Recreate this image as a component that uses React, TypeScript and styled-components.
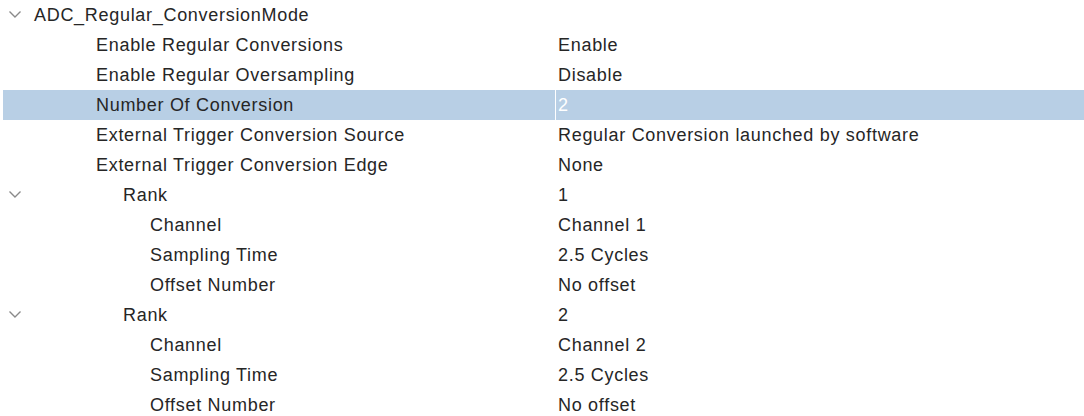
import React from "react";
import styled, { createGlobalStyle } from "styled-components";

const Global = createGlobalStyle`
  html, body { margin: 0; padding: 0; background: #ffffff; }
  body { font-family: "Liberation Sans", Arial, sans-serif; }
`;

const Tree = styled.div`
  width: 1084px;
  height: 416px;
  overflow: hidden;
  background: #ffffff;
  display: flex;
  flex-direction: column;
`;

const Row = styled.div<{ $selected?: boolean }>`
  display: grid;
  grid-template-columns: 552px 1px 1fr;
  flex: 0 0 30px;
  height: 30px;
  margin-left: 3px;
  background: ${(p) => (p.$selected ? "#b8cfe5" : "transparent")};
  color: #262626;
  font-size: 18px;
  letter-spacing: 0.7px;
`;

const NameCell = styled.div<{ $indent: number }>`
  display: flex;
  align-items: center;
  position: relative;
  padding-left: ${(p) => p.$indent - 3}px;
  white-space: nowrap;
`;

const Divider = styled.div<{ $selected?: boolean }>`
  background: ${(p) => (p.$selected ? "#ffffff" : "transparent")};
`;

const ValueCell = styled.div<{ $selected?: boolean }>`
  display: flex;
  align-items: center;
  padding-left: 2px;
  white-space: nowrap;
  color: ${(p) => (p.$selected ? "#ffffff" : "#262626")};
`;

const Chevron = styled.svg`
  position: absolute;
  left: 5px;
  top: 10px;
  width: 14px;
  height: 9px;
`;

type Item = {
  name: string;
  value?: string;
  indent: number;
  expander?: boolean;
  selected?: boolean;
};

const items: Item[] = [
  { name: "ADC_Regular_ConversionMode", indent: 34, expander: true },
  { name: "Enable Regular Conversions", value: "Enable", indent: 96 },
  { name: "Enable Regular Oversampling", value: "Disable", indent: 96 },
  { name: "Number Of Conversion", value: "2", indent: 96, selected: true },
  { name: "External Trigger Conversion Source", value: "Regular Conversion launched by software", indent: 96 },
  { name: "External Trigger Conversion Edge", value: "None", indent: 96 },
  { name: "Rank", value: "1", indent: 123, expander: true },
  { name: "Channel", value: "Channel 1", indent: 150 },
  { name: "Sampling Time", value: "2.5 Cycles", indent: 150 },
  { name: "Offset Number", value: "No offset", indent: 150 },
  { name: "Rank", value: "2", indent: 123, expander: true },
  { name: "Channel", value: "Channel 2", indent: 150 },
  { name: "Sampling Time", value: "2.5 Cycles", indent: 150 },
  { name: "Offset Number", value: "No offset", indent: 150 },
];

export default function App() {
  return (
    <>
      <Global />
      <Tree>
        {items.map((it, i) => (
          <Row key={i} $selected={it.selected}>
            <NameCell $indent={it.indent}>
              {it.expander && (
                <Chevron viewBox="0 0 14 9">
                  <path d="M1.5 1.5 L7 7 L12.5 1.5" fill="none" stroke="#8a8a8a" strokeWidth="1.4" />
                </Chevron>
              )}
              {it.name}
            </NameCell>
            <Divider $selected={it.selected} />
            <ValueCell $selected={it.selected}>{it.value ?? ""}</ValueCell>
          </Row>
        ))}
      </Tree>
    </>
  );
}
